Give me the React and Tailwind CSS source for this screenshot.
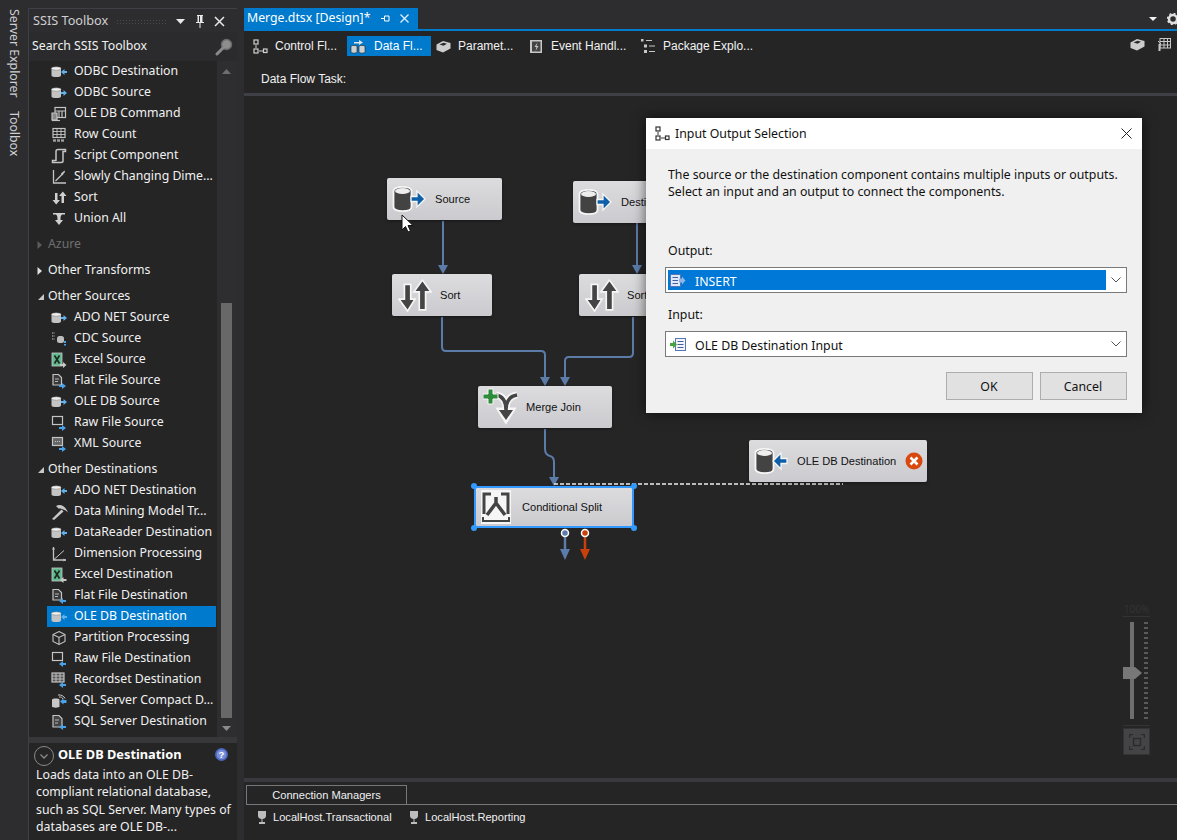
const FONT = "font-['Noto_Sans','Open_Sans',sans-serif]";
const ARIAL = "font-['Liberation_Sans',Arial,sans-serif]";

const Db = ({ dir = "r" }) => (
  <svg width="16" height="14" viewBox="0 0 16 14">
    <path d="M0.5 3.5C0.5 1.5 10 1.5 10 3.5V10.5C10 12.5 0.5 12.5 0.5 10.5Z" fill="#c4c4c4" />
    <ellipse cx="5.25" cy="3.5" rx="4.75" ry="1.7" fill="#f0f0f0" stroke="#777" strokeWidth=".5" />
    {dir === "r" ? (
      <path d="M10 6H12.5V4L16 7 12.5 10V8H10Z" fill="#5fb2f0" />
    ) : (
      <path d="M16 6H13.5V4L10 7 13.5 10V8H16Z" fill="#5fb2f0" />
    )}
  </svg>
);
const S = ({ children }) => (
  <svg width="16" height="16" viewBox="0 0 16 16" fill="none" stroke="#c4c4c4" strokeWidth="1.2">{children}</svg>
);
const Arrow = ({ d }) =>
  d === "r" ? (
    <path d="M8 12H11V10L15 13 11 16V14H8Z" fill="#4aa3e8" stroke="none" />
  ) : (
    <path d="M15 12H12V10L8 13 12 16V14H15Z" fill="#4aa3e8" stroke="none" />
  );

const icons = {
  dbL: <Db dir="l" />,
  dbR: <Db dir="r" />,
  cmd: <S><rect x="4" y="1.5" width="10.5" height="10" /><path d="M4 5H14.5M8 5V11M11 5V11" /><path d="M1 7H6V14H1Z" fill="#8a8a8a" /><path d="M1 14.5H9" /></S>,
  row: <S><rect x="2" y="1.5" width="12" height="9" /><path d="M2 4.5H14M2 7.5H14M6 1.5V10.5M10 1.5V10.5" strokeWidth=".9" /><path d="M2 13.5H14" strokeWidth="2.5" strokeDasharray="3 1" stroke="#9a9a9a" /></S>,
  script: <S><path d="M5 13V3.5C5 2 6 1.5 7 1.5H14.5V3.5H12V13C12 14.5 11 14.5 10 14.5H1.5V12.5H5" strokeWidth="1.5" /></S>,
  scd: <S><path d="M2.5 1V14H15" strokeWidth="1.3" /><path d="M4.5 12 12 4.5" /><path d="M10 4.5 13.5 1.5 14 3 11 6.5Z" fill="#c4c4c4" stroke="none" /></S>,
  sort: (
    <svg width="16" height="16" viewBox="0 0 16 16" fill="#cfcfcf">
      <path d="M4 3H6.5V10H9L5.2 14.5 1.5 10H4Z" />
      <path d="M10.5 13H13V6H15.5L11.8 1.5 8 6H10.5Z" />
    </svg>
  ),
  union: (
    <svg width="16" height="16" viewBox="0 0 16 16" fill="#cfcfcf">
      <path d="M2 2H14V3.5H11C9.5 4.5 9.5 6.5 9.5 9H12L8 14 4 9H6.5C6.5 6.5 6.5 4.5 5 3.5H2Z" />
    </svg>
  ),
  cdc: <S><path d="M1 2H4M1 5H4M1 8H4" strokeDasharray="1.5 1" /><rect x="6" y="5" width="7" height="7" rx="2.5" fill="#bdbdbd" stroke="none" /><path d="M14 10V14.5" stroke="#4aa3e8" strokeWidth="2" strokeDasharray="2 1" /></S>,
  xl: (d) => (
    <svg width="16" height="16" viewBox="0 0 16 16">
      <rect x="1" y="1" width="10" height="13" fill="#5fb98d" stroke="#c8c8c8" strokeWidth=".8" />
      <path d="M3.5 3.5 8.5 11.5M8.5 3.5 3.5 11.5" stroke="#1c2a24" strokeWidth="1.7" />
      <g fill="#c8c8c8"><path d={d === "r" ? "M9 12H12V10L15.5 13 12 16V14H9Z" : "M15.5 12H12.5V10L9 13 12.5 16V14H15.5Z"} /></g>
    </svg>
  ),
  file: (d) => <S><path d="M2 1.5H7.5L10.5 4.5V12H2Z" fill="#3a3a3a" /><path d="M4 6H8M4 8.5H7" strokeWidth=".9" /><Arrow d={d} /></S>,
  raw: (d) => <S><rect x="1.5" y="1.5" width="10" height="8" /><Arrow d={d} /></S>,
  xml: <S><rect x="1.5" y="1.5" width="10" height="8" fill="#666" /><path d="M4 5.5H9" strokeDasharray="1 1" /><Arrow d="r" /></S>,
  mine: (
    <svg width="18" height="16" viewBox="0 0 18 16" fill="#c8c8c8">
      <path d="M1 15 10.5 5.5 12.5 7.5 3 16Z" />
      <path d="M5 2C9 0 14 1 17 8.5 14 5.5 10.5 4.5 7.5 4.5Z" />
    </svg>
  ),
  dim: <S><path d="M2.5 1V14H15" strokeWidth="1.3" /><path d="M3 13.5 13 4.5" strokeWidth="1" /><path d="M2.5 1 1 3.5H4ZM15 14 12.5 12.5V15.5Z" fill="#c4c4c4" stroke="none" /></S>,
  part: <S><path d="M8 1.5 14 4.5V11.5L8 14.5 2 11.5V4.5Z" strokeWidth="1.1" /><path d="M2 4.5 8 7.5 14 4.5M8 7.5V14.5" strokeWidth="1.1" /></S>,
  rec: <S><rect x="1" y="1" width="12" height="9" fill="#555" /><path d="M1 4H13M1 7H13M5 1V10M9 1V10" strokeWidth=".9" /><Arrow d="l" /></S>,
  compact: (
    <svg width="16" height="16" viewBox="0 0 16 16">
      <path d="M1 6.5C1 5 8.5 5 8.5 6.5V13.5C8.5 15 1 15 1 13.5Z" fill="#c8c8c8" />
      <path d="M7 2C10 1.5 13 3 14 5.5M8 4C10 3.8 11.5 4.5 12 6" stroke="#c8c8c8" fill="none" />
      <path d="M15.5 7H12.5V5.5L9 8.5 12.5 11.5V10H15.5Z" fill="#4aa3e8" />
    </svg>
  ),
  sql: <S><path d="M2 1.5H8L11 4.5V13H2Z" fill="#444" /><path d="M4 6H8M4 9H7" strokeWidth=".9" /><Arrow d="l" /></S>,
};

const groups = [
  { items: [["ODBC Destination", icons.dbL], ["ODBC Source", icons.dbR], ["OLE DB Command", icons.cmd], ["Row Count", icons.row], ["Script Component", icons.script], ["Slowly Changing Dime...", icons.scd], ["Sort", icons.sort], ["Union All", icons.union]] },
  { name: "Azure", closed: true, dim: true },
  { name: "Other Transforms", closed: true },
  { name: "Other Sources", items: [["ADO NET Source", icons.dbR], ["CDC Source", icons.cdc], ["Excel Source", icons.xl("r")], ["Flat File Source", icons.file("r")], ["OLE DB Source", icons.dbR], ["Raw File Source", icons.raw("r")], ["XML Source", icons.xml]] },
  { name: "Other Destinations", items: [["ADO NET Destination", icons.dbL], ["Data Mining Model Tr...", icons.mine], ["DataReader Destination", icons.dbL], ["Dimension Processing", icons.dim], ["Excel Destination", icons.xl("l")], ["Flat File Destination", icons.file("l")], ["OLE DB Destination", icons.dbL, true], ["Partition Processing", icons.part], ["Raw File Destination", icons.raw("l")], ["Recordset Destination", icons.rec], ["SQL Server Compact D...", icons.compact], ["SQL Server Destination", icons.sql]] },
];

function Item({ label, icon, sel }) {
  return (
    <div className={`ml-[18px] mr-px flex h-[21px] items-center whitespace-nowrap pl-1 ${sel ? "bg-[#007acc] text-white" : ""}`}>
      <span className="flex w-[23px] shrink-0 items-center">{icon}</span>
      <span>{label}</span>
    </div>
  );
}

function Group({ g, first }) {
  return (
    <div className={first ? "" : "mt-[5px]"}>
      {g.name && (
        <div className={`flex h-[21px] items-center pl-2 ${g.dim ? "text-[#6f6f6f]" : ""}`}>
          <span className="flex w-[11px] items-center">
            {g.closed ? (
              <svg width="6" height="10" viewBox="0 0 6 10"><path d="M0.5 1 5 5 0.5 9Z" fill={g.dim ? "#5c5c5c" : "#e0e0e0"} /></svg>
            ) : (
              <svg width="8" height="8" viewBox="0 0 8 8"><path d="M7 1V7H1Z" fill="#c8c8c8" /></svg>
            )}
          </span>
          {g.name}
        </div>
      )}
      {g.items && g.items.map(([l, ic, sel]) => <Item key={l} label={l} icon={ic} sel={sel} />)}
    </div>
  );
}

function Toolbox() {
  return (
    <div className="mt-2 flex h-[832px] w-[209px] flex-col border-l border-t border-[#3f3f46] bg-[#252526] text-[12.3px] text-[#f1f1f1]">
      <div className="flex h-[23px] shrink-0 items-center bg-[#2d2d30] pl-[4px] pr-3 pt-px text-[#d0d0d0]">
        <span className="text-[12.7px]">SSIS Toolbox</span>
        <span className="mx-2 h-[5px] flex-1 bg-[radial-gradient(#4a4a4e_1px,transparent_1px)] bg-[length:3px_3px]" />
        <svg width="9" height="5" viewBox="0 0 9 5" className="ml-[2px]"><path d="M0 0H9L4.5 5Z" fill="#e8e8e8" /></svg>
        <svg width="10" height="13" viewBox="0 0 10 13" className="ml-[10px]" fill="#e8e8e8"><path d="M2 0H8V1H7.5V7H9V8H5.5V13H4.5V8H1V7H2.5V1H2ZM4 1V7H5V1Z" /></svg>
        <svg width="11" height="11" viewBox="0 0 11 11" className="ml-[9px]" stroke="#e8e8e8" strokeWidth="1.5"><path d="M1 1 10 10M10 1 1 10" /></svg>
      </div>
      <div className="flex h-[29px] shrink-0 items-center justify-between bg-[#2b2b2d] pl-[3px] pr-[4px] text-[#f1f1f1]">
        <span>Search SSIS Toolbox</span>
        <svg width="18" height="18" viewBox="0 0 18 18"><circle cx="11.5" cy="6.5" r="5" fill="#8e8e8e" stroke="#6a6a6a" strokeWidth="1.5" /><path d="M8 10 2 16" stroke="#8a8a8a" strokeWidth="3" strokeLinecap="round" /></svg>
      </div>
      <div className="flex h-[676px] shrink-0">
        <div className="w-[188px] shrink-0 overflow-hidden">
          {groups.map((g, i) => <Group key={i} g={g} first={i === 0} />)}
        </div>
        <div className="relative flex-1 bg-[#2e2e30]">
          <svg width="9" height="5" viewBox="0 0 9 5" className="absolute left-[5px] top-[8px]"><path d="M0 5H9L4.5 0Z" fill="#6e6e6e" /></svg>
          <div className="absolute left-[4px] top-[242px] h-[415px] w-[11px] bg-[#686868]" />
          <svg width="9" height="5" viewBox="0 0 9 5" className="absolute left-[5px] top-[665px]"><path d="M0 0H9L4.5 5Z" fill="#8a8a8a" /></svg>
        </div>
      </div>
      <div className="h-[6px] shrink-0 bg-[#37373a]" />
      <div className="relative flex-1 pl-[7px] pr-1 leading-[17.3px]">
        <div className="flex h-[23px] items-center gap-1 text-[12.8px] font-bold text-white">
          <svg width="20" height="20" viewBox="0 0 20 20" className="-ml-[2px] mt-[2px] shrink-0" fill="none" stroke="#8a8a8a" strokeWidth="1"><circle cx="10" cy="10" r="9.5" /><path d="M6.5 8.5 10 12 13.5 8.5" strokeWidth="1.3" /></svg>
          <span>OLE DB Destination</span>
          <svg width="13" height="13" viewBox="0 0 13 13" className="absolute left-[186px] top-[5px]"><circle cx="6.5" cy="6.5" r="6.5" fill="#4a66c0" /><circle cx="6.5" cy="6.5" r="4.8" fill="#7990d8" /><text x="6.5" y="10" textAnchor="middle" fontSize="9.5" fontWeight="700" fill="#fff" fontFamily="Liberation Sans">?</text></svg>
        </div>
        <div className="whitespace-nowrap text-[#f1f1f1]">
          <div>Loads data into an OLE DB-</div>
          <div>compliant relational database,</div>
          <div>such as SQL Server. Many types of</div>
          <div>databases are OLE DB-...</div>
        </div>
      </div>
    </div>
  );
}

function ToolTab({ icon, label, active, cls }) {
  return (
    <div className={`flex h-5 items-center whitespace-nowrap ${active ? "bg-[#007acc] text-white" : "text-[#f1f1f1]"} ${cls}`}>
      {icon}
      <span>{label}</span>
    </div>
  );
}

const FlowIcon = ({ color = "#d0d0d0" }) => (
  <svg width="15" height="15" viewBox="0 0 15 15" fill="none" stroke={color} strokeWidth="1.2"><rect x="1" y="1" width="4" height="4" /><rect x="1" y="10" width="4" height="4" /><rect x="10.5" y="10" width="3.5" height="3.5" /><path d="M3 6V9M6 12H10" strokeWidth="1" /></svg>
);
const Box3d = () => (
  <svg width="15" height="13" viewBox="0 0 15 13"><path d="M0.5 4.5 7 1 14.5 3V8.5L7 12.5 0.5 10Z" fill="#cdcdcd" /><path d="M3.5 4.5 7.5 2.8 11 3.8 7.5 5.8Z" fill="#2a2a2a" /></svg>
);

function NodeBox({ cls, icon, label, labelCls, children }) {
  return (
    <div className={`absolute flex h-[42px] items-center whitespace-nowrap rounded-[2px] bg-linear-to-b from-[#dcdcdf] to-[#cbcbcf] text-[11.1px] text-[#111] shadow-[0_1px_3px_rgba(0,0,0,0.4)] ${ARIAL} ${cls}`}>
      <span className="ml-1 flex w-[38px] shrink-0 items-center justify-center">{icon}</span>
      <span className={labelCls}>{label}</span>
      {children}
    </div>
  );
}

const DbBig = ({ dir }) => (
  <svg width="36" height="28" viewBox="0 0 36 28">
    <path d="M1.5 6C1.5 0.5 19.5 0.5 19.5 6V22C19.5 27.5 1.5 27.5 1.5 22Z" fill="#434343" stroke="#f6f6f6" strokeWidth="1.8" />
    <ellipse cx="10.5" cy="6" rx="7.5" ry="3" fill="#eeeeee" />
    {dir === "r" ? (
      <path d="M19 11.5H25V6L33 14 25 22V16.5H19Z" fill="#0e5fa8" stroke="#f6f6f6" strokeWidth="1.3" />
    ) : (
      <path d="M33 11.5H27V6L19 14 27 22V16.5H33Z" fill="#0e5fa8" stroke="#f6f6f6" strokeWidth="1.3" />
    )}
  </svg>
);
const SortBig = () => (
  <svg width="34" height="35" viewBox="0 0 32 33" fill="#444" stroke="#f6f6f6" strokeWidth="1.6">
    <path d="M6 6H12V20H16L9 31 1 20H6Z" />
    <path d="M20 30H26V13H31L23 2 15 13H20Z" />
  </svg>
);
const MergeBig = () => (
  <svg width="36" height="38" viewBox="0 0 36 38" fill="none">
    <path d="M13 7C19 8 23 12 23 20M34 7C28 8 23 12 23 20" stroke="#f6f6f6" strokeWidth="7" />
    <path d="M15 21H31L23 34Z" fill="#f6f6f6" stroke="#f6f6f6" strokeWidth="3" />
    <path d="M13 7C19 8 23 12 23 22M34 7C28 8 23 12 23 22" stroke="#444" strokeWidth="3.5" />
    <path d="M16 22H30L23 32Z" fill="#444" />
    <path d="M5 1H10V6H15V11H10V16H5V11H0V6H5Z" fill="#2e8b3a" stroke="#f6f6f6" strokeWidth="1" />
  </svg>
);
const SplitBig = () => (
  <svg width="30" height="34" viewBox="0 0 30 34">
    <rect width="30" height="34" fill="#f6f6f6" />
    <path d="M3 24V4H10M27 24V4H20" fill="none" stroke="#444" strokeWidth="3" />
    <path d="M15 7V15M15 13 6 25M15 13 24 25" fill="none" stroke="#444" strokeWidth="3.5" />
    <path d="M2 27V31H28V27" fill="none" stroke="#444" strokeWidth="2" />
  </svg>
);

const Head = ({ x, y, c = "#5b7ba8" }) => <path d={`M${x - 5} ${y - 9}H${x + 5}L${x} ${y}Z`} fill={c} />;

function Canvas() {
  return (
    <div className="relative flex-1 overflow-hidden bg-[#252526]">
      <svg className="absolute inset-0" width="933" height="682" viewBox="244 96 933 682" fill="none">
        <g stroke="#5b7ba8" strokeWidth="2">
          <path d="M443 221V266" />
          <path d="M637 223V266" />
          <path d="M442 317V347Q442 351 446 351H541Q545 351 545 355V379" />
          <path d="M633 317V353Q633 357 629 357H569Q565 357 565 361V379" />
          <path d="M545 429V449Q545 455 550 456Q554 457 554 462V479" />
          <path d="M565 537V553" strokeWidth="2.5" />
        </g>
        <Head x={443} y={274} />
        <Head x={637} y={274} />
        <Head x={545} y={386} />
        <Head x={565} y={386} />
        <Head x={554} y={486} />
        <path d="M560 549H570L565 560Z" fill="#5b7ba8" />
        <path d="M585 537V553" stroke="#c8400b" strokeWidth="2.5" />
        <path d="M580 549H590L585 560Z" fill="#c8400b" />
        <path d="M554 484H843" stroke="#eee" strokeWidth="1.5" strokeDasharray="4 2" />
        <circle cx="565" cy="533" r="3.5" fill="#5b7ba8" stroke="#fff" strokeWidth="1.5" />
        <circle cx="585" cy="533" r="3.5" fill="#c8400b" stroke="#fff" strokeWidth="1.5" />
      </svg>

      <NodeBox cls="left-[143px] top-[82px] w-[115px]" icon={<DbBig dir="r" />} label="Source" labelCls="ml-[6px]" />
      <NodeBox cls="left-[329px] top-[85px] w-[115px]" icon={<DbBig dir="r" />} label="Destination" labelCls="ml-[6px]" />
      <NodeBox cls="left-[148px] top-[178px] w-[100px]" icon={<SortBig />} label="Sort" labelCls="ml-[6px]" />
      <NodeBox cls="left-[335px] top-[178px] w-[100px]" icon={<SortBig />} label="Sort" labelCls="ml-[6px]" />
      <NodeBox cls="left-[234px] top-[290px] w-[134px]" icon={<MergeBig />} label="Merge Join" labelCls="ml-[6px]" />
      <NodeBox cls="left-[505px] top-[344px] w-[178px]" icon={<DbBig dir="l" />} label="OLE DB Destination" labelCls="ml-[6px]">
        <svg width="18" height="18" viewBox="0 0 18 18" className="absolute left-[156px] top-[12px]"><circle cx="9" cy="9" r="8.5" fill="#d9480f" /><path d="M5.5 5.5 12.5 12.5M12.5 5.5 5.5 12.5" stroke="#fff" strokeWidth="2.5" /></svg>
      </NodeBox>

      <div className="absolute left-[230px] top-[390px] h-[42px] w-[160px] rounded-[3px] border-2 border-[#3399ff] bg-linear-to-b from-[#dcdcdf] to-[#cbcbcf]">
        <div className={`flex h-full items-center whitespace-nowrap text-[11.1px] text-[#111] ${ARIAL}`}>
          <span className="ml-[5px] flex w-[30px] shrink-0">
            <SplitBig />
          </span>
          <span className="ml-[11px]">Conditional Split</span>
        </div>
        <span className="absolute -left-[5px] -top-[5px] size-[6px] rounded-full bg-[#3399ff]" />
        <span className="absolute -right-[5px] -top-[5px] size-[6px] rounded-full bg-[#3399ff]" />
        <span className="absolute -left-[5px] -bottom-[5px] size-[6px] rounded-full bg-[#3399ff]" />
        <span className="absolute -right-[5px] -bottom-[5px] size-[6px] rounded-full bg-[#3399ff]" />
      </div>

      <svg width="14" height="20" viewBox="0 0 14 20" className="absolute left-[157px] top-[118px]">
        <path d="M1 1V16L4.5 12.5 7 18 9.5 17 7 11.5H12Z" fill="#fff" stroke="#111" strokeWidth="1" />
      </svg>

      <div className="absolute left-[879px] top-[507px] flex w-[27px] flex-col">
        <div className="h-[13px] text-center text-[10px] leading-[13px] text-[#333]">100%</div>
        <div className="h-px bg-[#333]" />
        <div className="relative mt-[5px] h-[97px]">
          <div className="absolute left-[7px] top-0 h-full w-1 bg-[#6e6e6e]" />
          <div className="absolute left-[21px] top-0 flex h-full w-[4px] flex-col justify-between">
            {Array.from({ length: 20 }).map((_, i) => <div key={i} className="h-[2px] bg-[#5a5a5a]" />)}
          </div>
          <svg width="20" height="12" viewBox="0 0 20 12" className="absolute left-0 top-[45px]"><path d="M0 0H12L19 6 12 12H0Z" fill="#787878" /></svg>
        </div>
        <div className="mt-[6px] h-px bg-[#333]" />
        <div className="mt-[2px] flex h-[27px] items-center justify-center border border-[#333] bg-[#444446]">
          <svg width="16" height="16" viewBox="0 0 16 16" fill="none" stroke="#2c2c2c" strokeWidth="1.5"><rect x="4.5" y="4.5" width="7" height="7" /><path d="M0.5 4V0.5H4M12 0.5H15.5V4M15.5 12V15.5H12M4 15.5H0.5V12" /></svg>
        </div>
      </div>
    </div>
  );
}

function Select({ sel, icon, label }) {
  return (
    <div className="flex h-[26px] items-center border border-[#7a7a7a] bg-white pl-[2px]">
      <div className={`flex h-5 flex-1 items-center pl-[2px] ${sel ? "bg-[#0078d7] text-white" : "text-[#111]"}`}>
        <span className="flex w-[25px] items-center">{icon}</span>
        <span className="pt-[4px]">{label}</span>
      </div>
      <span className="flex w-[20px] shrink-0 justify-center">
        <svg width="10" height="6" viewBox="0 0 10 6" fill="none" stroke="#555" strokeWidth="1"><path d="M0.5 0.5 5 5 9.5 0.5" /></svg>
      </span>
    </div>
  );
}

function Btn({ children }) {
  return <div className="flex h-7 w-[87px] items-center justify-center border border-[#adadad] bg-[#e1e1e1] pr-px pt-[3px] text-[#111]">{children}</div>;
}

function Dialog() {
  return (
    <div className="absolute left-[646px] top-[118px] flex h-[295px] w-[496px] flex-col bg-[#f0f0f0] text-[12.33px] text-[#111] shadow-[0_0_12px_rgba(0,0,0,0.6)]">
      <div className="flex h-[31px] shrink-0 items-center bg-white pl-[9px] pr-[10px]">
        <FlowIcon color="#333" />
        <span className="ml-[5px] flex-1 pt-[2px]">Input Output Selection</span>
        <svg width="11" height="11" viewBox="0 0 11 11" stroke="#222" strokeWidth="1"><path d="M0.5 0.5 10.5 10.5M10.5 0.5 0.5 10.5" /></svg>
      </div>
      <div className="flex flex-1 flex-col pl-[19px] pr-[15px]">
        <div className="ml-[3px] mt-[17px] whitespace-nowrap leading-[17px]">
          <div>The source or the destination component contains multiple inputs or outputs.</div>
          <div>Select an input and an output to connect the components.</div>
        </div>
        <div className="ml-[3px] mt-[42px] h-[17px] leading-[17px]">Output:</div>
        <div className="mt-[8px]">
          <Select sel label="INSERT" icon={<svg width="16" height="13" viewBox="0 0 16 13"><rect x="0.5" y="0.5" width="10" height="12" fill="#dfe8f7" stroke="#5575b5" /><path d="M2.5 3.5H8M2.5 6.5H8M2.5 9.5H8" stroke="#44609c" /><path d="M9 4.5H12V2.5L15.5 6.5 12 10.5V8.5H9Z" fill="#8db5e8" /></svg>} />
        </div>
        <div className="ml-[3px] mt-[13px] h-[17px] leading-[17px]">Input:</div>
        <div className="mt-[8px]">
          <Select label="OLE DB Destination Input" icon={<svg width="16" height="13" viewBox="0 0 16 13"><rect x="5.5" y="0.5" width="10" height="12" fill="#f2f5fb" stroke="#5575b5" /><path d="M7.5 3.5H13.5M7.5 6.5H13.5M7.5 9.5H13.5" stroke="#44609c" /><path d="M0 5H3V2.5L7 6.5 3 10.5V8H0Z" fill="#49a33b" /></svg>} />
        </div>
        <div className="mt-[15px] flex justify-end gap-[7px]">
          <Btn>OK</Btn>
          <Btn>Cancel</Btn>
        </div>
      </div>
    </div>
  );
}

const Cylinder = () => (
  <svg width="10" height="15" viewBox="0 0 10 15" fill="#bdbdbd" className="shrink-0"><path d="M1 1H9V6C9 8 7 9 5.5 9V12H8V14H2V12H4.5V9C3 9 1 8 1 6Z" /></svg>
);

export default function App() {
  return (
    <div className={`relative flex h-[840px] w-[1177px] overflow-hidden bg-[#2d2d30] ${FONT}`}>
      <div className="flex w-[28px] shrink-0 flex-col items-center pr-px pt-[9px] text-[12.3px] text-[#d0d0d0]">
        <div className="[writing-mode:vertical-rl]">Server Explorer</div>
        <div className="mt-[13px] [writing-mode:vertical-rl]">Toolbox</div>
      </div>
      <Toolbox />
      <div className="ml-[7px] flex min-w-0 flex-1 flex-col">
        <div className="flex h-[29px] shrink-0 items-end justify-between">
          <div className="flex h-[21px] w-[174px] items-center whitespace-nowrap bg-[#007acc] pl-[3px] text-[12.3px] text-white">
            <span>Merge.dtsx [Design]*</span>
            <svg width="9" height="9" viewBox="0 0 9 9" className="ml-[11px]" fill="none" stroke="#fff"><path d="M0 4.5H3M3.5 2V7H8V2Z" /></svg>
            <svg width="9" height="9" viewBox="0 0 9 9" className="ml-[10px]" stroke="#dfefff" strokeWidth="1.3"><path d="M0.5 0.5 8.5 8.5M8.5 0.5 0.5 8.5" /></svg>
          </div>
          <div className="flex h-[21px] items-center">
            <svg width="8" height="4" viewBox="0 0 8 4"><path d="M0 0H8L4 4Z" fill="#f1f1f1" /></svg>
            <svg width="12" height="12" viewBox="0 0 12 12" className="-mr-[2px] ml-[10px]"><circle cx="6" cy="6" r="4" fill="none" stroke="#e0e0e0" strokeWidth="2.5" /><circle cx="6" cy="6" r="5.5" fill="none" stroke="#e0e0e0" strokeWidth="1.5" strokeDasharray="2 2.3" /></svg>
          </div>
        </div>
        <div className="h-[2px] shrink-0 bg-[#007acc]" />
        <div className={`flex h-[62px] shrink-0 flex-col bg-[#252526] text-[12px] ${ARIAL}`}>
          <div className="relative flex h-[30px] items-center pl-[9px]">
            <ToolTab cls="w-[94px] gap-[7px]" icon={<FlowIcon />} label="Control Fl..." />
            <ToolTab active cls="w-[84px] gap-[8px] pl-[3px]" icon={
              <svg width="16" height="16" viewBox="0 0 16 16"><path d="M1 8.5C1 7 7 7 7 8.5V14C7 15.5 1 15.5 1 14ZM9 8.5C9 7 15 7 15 8.5V14C15 15.5 9 15.5 9 14Z" fill="#d0d0d0" stroke="#222" strokeWidth=".6" /><path d="M4 4H9V2L13 4.5 9 7V5.5H4Z" fill="#e4e4e4" /></svg>
            } label="Data Fl..." />
            <ToolTab cls="ml-[5px] w-[94px] gap-[7px]" icon={<Box3d />} label="Paramet..." />
            <ToolTab cls="w-[111px] gap-[9px]" icon={<svg width="12" height="13" viewBox="0 0 12 13"><rect width="12" height="13" fill="#c8c8c8" /><rect x="2" y="1.5" width="8.5" height="10" fill="#444" /><path d="M7.5 2.5 4.5 7H6.500L5.500 11 8.500 6H6.500Z" fill="#c8c8c8" /></svg>} label="Event Handl..." />
            <ToolTab cls="gap-2" icon={<svg width="14" height="14" viewBox="0 0 14 14" fill="#c8c8c8"><rect x="0" y="0" width="2.500" height="2.500" /><rect x="3" y="5.500" width="3" height="3" /><rect x="3" y="11" width="3" height="3" /><rect x="5" y="1" width="6" height="1" /><rect x="8" y="6.500" width="6" height="1" /><rect x="8" y="12" width="6" height="1" /></svg>} label="Package Explo..." />
            <span className="absolute right-[32px] top-[7px]"><Box3d /></span>
            <svg width="14" height="15" viewBox="0 0 14 15" className="absolute right-[6px] top-[6px]" fill="none" stroke="#c8c8c8"><rect x="3" y="1.5" width="10.5" height="9.5" /><path d="M3 4.5H13.5M3 8H13.5M7 1.5V11M10.5 1.5V11" /><path d="M2.5 7V14" strokeWidth="2" /><path d="M1 4 4 7" /></svg>
          </div>
          <div className="flex flex-1 items-start pl-[17px] pt-[9px] text-[#f1f1f1]">Data Flow Task:</div>
        </div>
        <div className="h-[3px] shrink-0 bg-[#3f3f46]" />
        <Canvas />
        <div className="h-[4px] shrink-0 bg-[#3a3a3e]" />
        <div className={`flex h-[58px] shrink-0 flex-col bg-[#252526] text-[11.1px] text-[#f1f1f1] ${ARIAL}`}>
          <div className="ml-[2px] mt-[3px] flex h-[19px] w-[161px] shrink-0 items-center justify-center border border-b-0 border-[#77777a]">Connection Managers</div>
          <div className="ml-[2px] h-px shrink-0 bg-[#77777a]" />
          <div className="mt-[4px] flex items-center pl-[13px]">
            <div className="flex w-[152px] items-center gap-[6px]">
              <Cylinder />
              <span>LocalHost.Transactional</span>
            </div>
            <div className="flex items-center gap-[6px]">
              <Cylinder />
              <span>LocalHost.Reporting</span>
            </div>
          </div>
        </div>
      </div>
      <Dialog />
    </div>
  );
}
